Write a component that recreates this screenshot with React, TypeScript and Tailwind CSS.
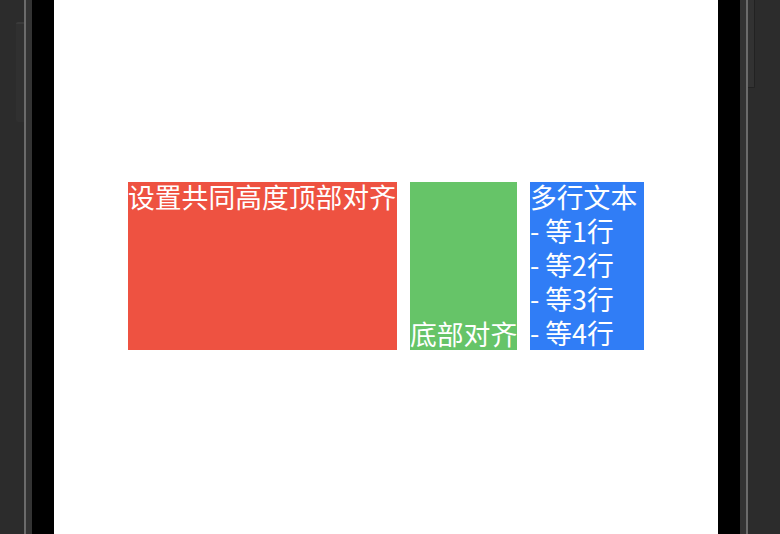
const cjk = "font-['PingFang_SC','Noto_Sans_CJK_SC',sans-serif]";

// Left edge of the device: side key, rim highlight, bezel
const LeftFrame = () => (
  <div className="flex h-full shrink-0">
    <div className="w-[24px] bg-[#2c2c2c] flex justify-end pt-[22px]">
      <div className="w-[8px] h-[100px] bg-[#303030] border-t-2 border-[#3a3a3a] rounded-l-[2px]" />
    </div>
    <div className="w-[2px] bg-[#6b6b6b]" />
    <div className="w-[6px] bg-[#333333]" />
    <div className="w-[22px] bg-black" />
  </div>
);

const RightFrame = () => (
  <div className="flex h-full shrink-0">
    <div className="w-[22px] bg-black" />
    <div className="w-[6px] bg-[#333333]" />
    <div className="w-[2px] bg-[#6b6b6b]" />
    <div className="flex-1 w-[32px] bg-[#2c2c2c] flex flex-col">
      <div className="w-[7px] h-[88px] bg-[#323232] border-r border-b border-[#222] rounded-br-[2px]" />
    </div>
  </div>
);

export default function App() {
  return (
    <div className="w-[780px] h-[534px] flex overflow-hidden bg-[#2c2c2c]">
      <LeftFrame />
      <div className="flex-1 bg-white flex items-center justify-center pb-[2px]">
        <div className={`flex gap-[13px] h-[168px] text-white text-[26.8px] leading-[34px] ${cjk}`}>
          <div className="w-[269px] bg-[#ee5241] flex items-start whitespace-nowrap">
            <span className="-mt-[2px]">设置共同高度顶部对齐</span>
          </div>
          <div className="w-[107px] bg-[#66c468] flex items-end whitespace-nowrap">
            <span className="mb-[-1px]">底部对齐</span>
          </div>
          <div className="w-[114px] bg-[#307df6] flex flex-col whitespace-nowrap">
            <div className="flex flex-col -mt-[2px]">
              <span>多行文本</span>
              <span>- 等1行</span>
              <span>- 等2行</span>
              <span>- 等3行</span>
              <span>- 等4行</span>
            </div>
          </div>
        </div>
      </div>
      <RightFrame />
    </div>
  );
}
